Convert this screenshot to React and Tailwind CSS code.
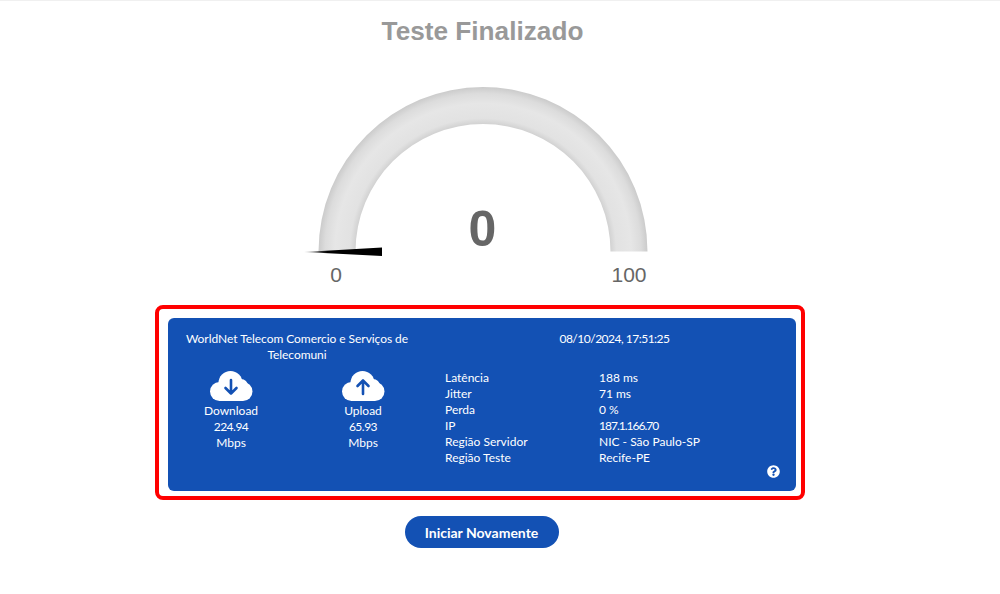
import React from 'react';
import { FaQuestionCircle } from 'react-icons/fa';

const stats = [
  ['Latência', '188 ms'],
  ['Jitter', '71 ms'],
  ['Perda', '0 %'],
  ['IP', '187.1.166.70'],
  ['Região Servidor', 'NIC - São Paulo-SP'],
  ['Região Teste', 'Recife-PE'],
];

const Gauge = () => (
  <svg width="360" height="212" viewBox="0 0 360 212" className="block">
    <defs>
      <radialGradient id="arcShade" gradientUnits="userSpaceOnUse" cx="180" cy="165.5" r="164.5">
        <stop offset="0.775" stopColor="#d2d2d2" />
        <stop offset="0.81" stopColor="#e2e2e2" />
        <stop offset="0.9" stopColor="#e6e6e6" />
        <stop offset="0.96" stopColor="#dcdcdc" />
        <stop offset="1" stopColor="#cbcbcb" />
      </radialGradient>
      <linearGradient id="needleFade" x1="0" x2="1" y1="0" y2="0">
        <stop offset="0" stopColor="#000" stopOpacity="0.2" />
        <stop offset="0.3" stopColor="#000" />
        <stop offset="1" stopColor="#000" />
      </linearGradient>
    </defs>
    <path d="M15.5 165.5 A164.5 164.5 0 0 1 344.5 165.5 L307.5 165.5 A127.5 127.5 0 0 0 52.5 165.5 Z" fill="url(#arcShade)" />
    <polygon points="1,166 79,161.5 79,170" fill="url(#needleFade)" />
    <text x="179.5" y="160" textAnchor="middle" fontFamily="'Liberation Sans', Arial, sans-serif" fontWeight="700" fontSize="50" fill="#666">0</text>
    <text x="33" y="196" textAnchor="middle" fontFamily="'Liberation Sans', Arial, sans-serif" fontSize="21" fill="#666">0</text>
    <text x="326" y="196" textAnchor="middle" fontFamily="'Liberation Sans', Arial, sans-serif" fontSize="21" fill="#666">100</text>
  </svg>
);

// nuvem com seta fina, igual ao icone do painel
const CloudIcon = ({ up }) => (
  <svg width="43" height="32" viewBox="0 0 43 32" className="block">
    <g fill="#fff">
      <circle cx="9.5" cy="20.5" r="9.5" />
      <circle cx="20.5" cy="12" r="12" />
      <circle cx="31" cy="15" r="7" />
      <circle cx="33" cy="20.5" r="9.5" />
      <rect x="9" y="14" width="24" height="16" />
    </g>
    <g fill="none" stroke="#1351b4" strokeWidth="2.6" strokeLinecap="round" strokeLinejoin="round">
      {up ? (
        <path d="M21 23V9.5M15.5 15L21 9.5L26.5 15" />
      ) : (
        <path d="M21 9V22.5M15.5 17L21 22.5L26.5 17" />
      )}
    </g>
  </svg>
);

const SpeedColumn = ({ up, label, value }) => (
  <div className="w-[126px] flex flex-col items-center">
    <CloudIcon up={up} />
    <div>{label}</div>
    <div className="tracking-[-0.5px]">{value}</div>
    <div>Mbps</div>
  </div>
);

const App = () => (
  <div className="w-[1000px] h-[594px] bg-white border-t border-[#f0f0f0] overflow-hidden font-['Lato','Liberation_Sans',sans-serif]">
    <div className="w-[965px] flex flex-col items-center">
      <h1 className="mt-[12px] h-[36px] text-[26.2px] leading-[36px] font-bold text-[#999] font-['Liberation_Sans',Arial,sans-serif]">
        Teste Finalizado
      </h1>
      <div className="mt-[37px] h-[219px]">
        <Gauge />
      </div>

      <div className="mr-[5px] w-[650px] h-[195px] pt-[9px] pl-[9px] pr-[5px] pb-[5px] border-4 border-[#ff0000] rounded-[8px]">
        <div className="h-[173px] bg-[#1351b4] rounded-[6px] text-white text-[12px] leading-[16px] pt-[13px] flex flex-col">
          <div className="flex gap-[19px]">
            <div className="w-[258px] text-center px-[6px] tracking-[-0.05px]">WorldNet Telecom Comercio e Serviços de Telecomuni</div>
            <div className="flex-1 mr-[12px] text-center tracking-[-0.5px]">08/10/2024, 17:51:25</div>
          </div>
          <div className="flex gap-[19px] mt-[8px]">
            <div className="w-[258px] flex justify-between">
              <SpeedColumn label="Download" value="224.94" />
              <SpeedColumn up label="Upload" value="65.93" />
            </div>
            <div className="flex-1 -mt-[1px]">
              {stats.map(([label, value]) => (
                <div key={label} className="flex">
                  <div className="w-[154px]">{label}</div>
                  <div className={label === 'IP' ? 'tracking-[-1px]' : ''}>{value}</div>
                </div>
              ))}
            </div>
          </div>
          <div className="flex justify-end pr-[16px] -mt-[1px]">
            <FaQuestionCircle size={13} />
          </div>
        </div>
      </div>

      <button className="mt-[16px] mr-[2px] w-[154px] h-[32px] rounded-full bg-[#1351b4] text-white text-[14px] font-bold">
        Iniciar Novamente
      </button>
    </div>
  </div>
);

export default App;
